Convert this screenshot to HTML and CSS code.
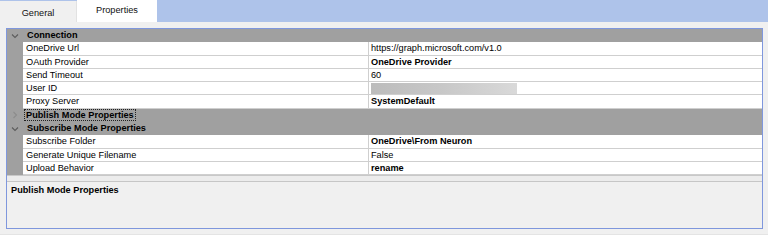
FILE: index.html
```html
<!DOCTYPE html>
<html>
<head>
<meta charset="utf-8">
<link rel="stylesheet" href="styles.css">
</head>
<body>
<div class="tabs">
  <div class="tab">General</div>
  <div class="tab active">Properties</div>
</div>
<div class="panel">
  <div class="gridbox">
    <div class="grid">
      <div class="row cat">
        <div class="gutter"><svg class="chev" width="8" height="6" viewBox="0 0 8 6"><path d="M1 1.5 L4 4.5 L7 1.5" fill="none" stroke="#5c5c5c" stroke-width="1.1"/></svg></div>
        <div class="catlabel">Connection</div>
      </div>
      <div class="row prop"><div class="gutter"></div><div class="name">OneDrive Url</div><div class="value">https://graph.microsoft.com/v1.0</div></div>
      <div class="row prop"><div class="gutter"></div><div class="name">OAuth Provider</div><div class="value bold">OneDrive Provider</div></div>
      <div class="row prop"><div class="gutter"></div><div class="name">Send Timeout</div><div class="value">60</div></div>
      <div class="row prop"><div class="gutter"></div><div class="name">User ID</div><div class="value"><span class="redact"></span></div></div>
      <div class="row prop"><div class="gutter"></div><div class="name">Proxy Server</div><div class="value bold">SystemDefault</div></div>
      <div class="row cat">
        <div class="gutter"><svg class="chev" width="8" height="8" viewBox="0 0 8 8"><path d="M2.5 1 L5.5 4 L2.5 7" fill="none" stroke="#8c8c8c" stroke-width="1.1"/></svg></div>
        <div class="catlabel"><span class="focus">Publish Mode Properties</span></div>
      </div>
      <div class="row cat">
        <div class="gutter"><svg class="chev" width="8" height="6" viewBox="0 0 8 6"><path d="M1 1.5 L4 4.5 L7 1.5" fill="none" stroke="#5c5c5c" stroke-width="1.1"/></svg></div>
        <div class="catlabel">Subscribe Mode Properties</div>
      </div>
      <div class="row prop"><div class="gutter"></div><div class="name">Subscribe Folder</div><div class="value bold">OneDrive\From Neuron</div></div>
      <div class="row prop"><div class="gutter"></div><div class="name">Generate Unique Filename</div><div class="value">False</div></div>
      <div class="row prop"><div class="gutter"></div><div class="name">Upload Behavior</div><div class="value bold">rename</div></div>
    </div>
    <div class="splitter"></div>
    <div class="desc"><div class="desctitle">Publish Mode Properties</div></div>
  </div>
</div>
</body>
</html>
```
FILE: styles.css
```css
html, body {
  margin: 0;
  padding: 0;
  background: #f0f0f0;
  font-family: "Liberation Sans", Arial, sans-serif;
  font-size: 9.2px;
  color: #000;
}
.tabs {
  height: 22px;
  background: #aec3ea;
  display: flex;
  align-items: flex-end;
}
.tab {
  box-sizing: border-box;
  width: 77px;
  height: 21px;
  padding-top: 4px;
  line-height: 17px;
  text-align: center;
  background: #f0f0f0;
  border-right: 1px solid #e2e2e2;
  color: #111;
}
.tab.active {
  width: 80px;
  height: 22px;
  padding-top: 1px;
  line-height: 19px;
  background: #ffffff;
  border-right: none;
}
.panel {
  height: 213px;
  box-sizing: border-box;
  padding: 6px 5px 0 6px;
  background: #f0f0f0;
  border-bottom: 1px solid #e4e4e4;
}
.gridbox {
  box-sizing: border-box;
  height: 201px;
  border: 1px solid #7f97dd;
  display: flex;
  flex-direction: column;
  background: #f0f0f0;
}
.grid {
  background: #ffffff;
}
.row {
  box-sizing: border-box;
  height: 13.3px;
  display: grid;
  grid-template-columns: 16px 346px 1fr;
  line-height: 13px;
}
.gutter {
  background: #a0a0a0;
  display: flex;
  align-items: center;
  justify-content: center;
}
.cat {
  background: #a0a0a0;
}
.catlabel {
  grid-column: 2 / 4;
  font-weight: bold;
  padding-left: 4px;
  line-height: 13.3px;
  color: #000;
}
.focus {
  outline: 1px dotted #222;
  outline-offset: 0;
  padding: 0 1px;
  margin-left: -2px;
}
.name, .value {
  border-bottom: 1px solid #cfcfcf;
  white-space: nowrap;
  overflow: hidden;
}
.name {
  padding-left: 3px;
  border-right: 1px solid #cfcfcf;
}
.value {
  padding-left: 2px;
}
.bold {
  font-weight: bold;
}
.redact {
  display: inline-block;
  width: 146px;
  height: 11px;
  margin-top: 1px;
  vertical-align: top;
  background: linear-gradient(to right, #bcbcbc 0%, #c8c8c8 50%, #d9d9d9 100%);
}
.splitter {
  box-sizing: border-box;
  height: 7px;
  background: #ececec;
  border-top: 1px solid #c8c8c8;
  border-bottom: 1px solid #c6c6c6;
}
.desc {
  flex: 1;
  background: #f0f0f0;
  padding: 3px 4px 0 4px;
}
.desctitle {
  font-weight: bold;
}
```
